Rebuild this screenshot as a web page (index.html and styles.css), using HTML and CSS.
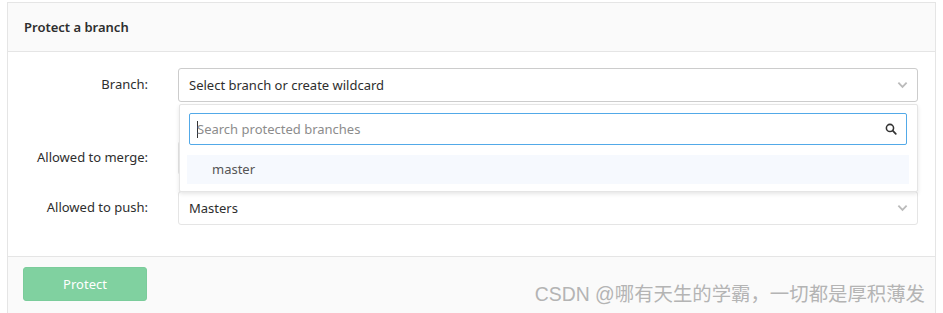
FILE: index.html
```html
<!DOCTYPE html>
<html lang="en">

<head>
    <meta charset="UTF-8">
    <meta name="viewport" content="width=device-width, initial-scale=1.0">
    <title>Protected branches</title>
    <link rel="stylesheet" href="styles.css">
</head>

<body>
    <div class="panel">
        <div class="panel-heading">Protect a branch</div>

        <div class="panel-body">
            <div class="form-row branch-row">
                <label class="form-label">Branch:</label>
                <div class="field">
                    <div class="select-box">
                        <span>Select branch or create wildcard</span>
                        <svg class="chevron" viewBox="0 0 12 8" width="11" height="8"><path d="M1.5 1.5 6 6l4.5-4.5" fill="none" stroke="#bbb" stroke-width="2"/></svg>
                    </div>

                    <div class="dropdown">
                        <div class="search-field">
                            <span class="caret"></span>
                            <span class="placeholder">Search protected branches</span>
                            <svg class="search-icon" viewBox="0 0 14 14" width="12" height="12"><circle cx="5.8" cy="5.8" r="4.2" fill="none" stroke="#333" stroke-width="1.8"/><path d="M9 9l3.6 3.6" stroke="#333" stroke-width="2" stroke-linecap="round"/></svg>
                        </div>
                        <ul class="dropdown-list">
                            <li class="active">master</li>
                        </ul>
                    </div>
                </div>
            </div>

            <div class="form-row">
                <label class="form-label">Allowed to merge:</label>
                <div class="field">
                    <div class="select-box"></div>
                </div>
            </div>

            <div class="form-row">
                <label class="form-label">Allowed to push:</label>
                <div class="field">
                    <div class="select-box">
                        <span>Masters</span>
                        <svg class="chevron" viewBox="0 0 12 8" width="11" height="8"><path d="M1.5 1.5 6 6l4.5-4.5" fill="none" stroke="#bbb" stroke-width="2"/></svg>
                    </div>
                </div>
            </div>
        </div>

        <div class="panel-footer">
            <button class="protect-button" disabled>Protect</button>
        </div>
    </div>

    <div class="watermark">CSDN @哪有天生的学霸，一切都是厚积薄发</div>
</body>

</html>
```

FILE: styles.css
```css
body {
    font-family: "Segoe UI", "Noto Sans", sans-serif;
    font-size: 14px;
    color: #2e2e2e;
    background-color: #fff;
    margin: 0;
    padding: 0;
}

.panel {
    margin: 2px 7px 0 7px;
    border: 1px solid #e5e5e5;
    border-bottom: none;
}

.panel-heading {
    background-color: #fafafa;
    border-bottom: 1px solid #e5e5e5;
    padding: 14px 16px;
    line-height: 20px;
    font-weight: 600;
    font-size: 13px;
}

.panel-body {
    padding: 16px 17px 31px 16px;
}

.form-row {
    display: flex;
    align-items: flex-start;
    margin-bottom: 16px;
}

.form-row:last-child {
    margin-bottom: 0;
}

.branch-row {
    margin-bottom: 39px;
}

.form-label {
    width: 124px;
    margin-right: 30px;
    text-align: right;
    line-height: 33px;
    font-size: 13px;
}

.field {
    flex: 1;
    position: relative;
}

.select-box {
    height: 32px;
    border: 1px solid #e5e5e5;
    border-radius: 3px;
    display: flex;
    align-items: center;
    justify-content: space-between;
    padding: 0 9px 0 10px;
    font-size: 13px;
}

.branch-row .select-box {
    border-color: #ccc;
}

.chevron {
    display: block;
}

.dropdown {
    position: absolute;
    top: 36px;
    left: 1px;
    right: 0;
    z-index: 2;
    background-color: #fff;
    border: 1px solid #e5e5e5;
    border-radius: 2px;
    box-shadow: 0 2px 4px rgba(0, 0, 0, 0.1);
    padding: 8px 10px 7px 9px;
}

.search-field {
    height: 30px;
    border: 1px solid #52a9e8;
    border-radius: 2px;
    display: flex;
    align-items: center;
    padding: 0 9px 0 7px;
    font-size: 13px;
}

.caret {
    width: 1px;
    height: 17px;
    background-color: #333;
    margin-right: -1px;
}

.placeholder {
    color: #8c8c8c;
    flex: 1;
}

.search-icon {
    display: block;
}

.dropdown-list {
    list-style: none;
    margin: 10px -2px 0 -2px;
    padding: 0;
}

.dropdown-list li {
    height: 29px;
    line-height: 29px;
    padding-left: 25px;
    color: #555;
    font-size: 13px;
}

.dropdown-list li.active {
    background-color: #f6f9fe;
}

.panel-footer {
    background-color: #fafafa;
    border-top: 1px solid #e5e5e5;
    padding: 10px 16px 20px 15px;
}

.protect-button {
    width: 124px;
    height: 34px;
    background-color: #80d1a0;
    border: 1px solid #7bcc9b;
    border-radius: 3px;
    color: #fff;
    font-family: inherit;
    font-size: 13px;
}

.watermark {
    position: absolute;
    right: 18px;
    top: 278px;
    font-family: "Liberation Sans", "Noto Sans CJK SC", sans-serif;
    font-size: 19.4px;
    color: #b4b4b4;
}
```
